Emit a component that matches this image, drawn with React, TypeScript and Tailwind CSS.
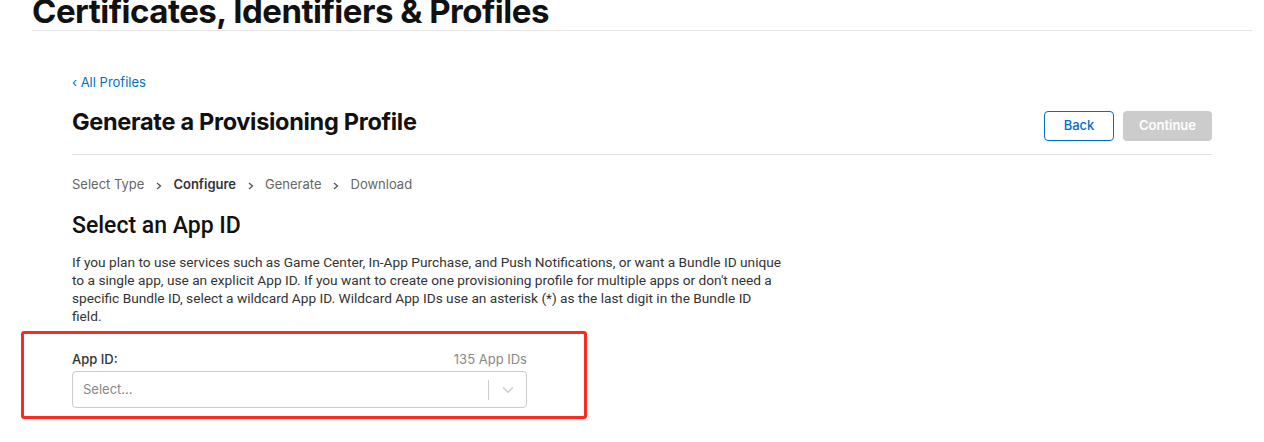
import { ChevronDown } from 'lucide-react';

const steps = [
  { label: 'Select Type', active: false },
  { label: 'Configure', active: true },
  { label: 'Generate', active: false },
  { label: 'Download', active: false },
];

export default function App() {
  return (
    <div className="relative h-[442px] w-[1264px] overflow-hidden bg-white font-['Inter',sans-serif] text-[#111]">
      {/* page header, cut off at the top */}
      <div className="ml-8 mr-3 -mt-[8px] border-b border-[#e5e5e5] pb-[0px]">
        <h1 className="text-[33px] font-bold leading-[38px] tracking-[-0.5px]">Certificates, Identifiers &amp; Profiles</h1>
      </div>

      <div className="ml-[72px] mr-[52px] pt-[43px]">
        <a className="block text-[13px] leading-[16px] text-[#0070c9]">‹ All Profiles</a>

        <div className="mt-[13px] flex items-center justify-between border-b border-[#e0e0e0] pb-[13px]">
          <h2 className="text-[23.5px] font-bold leading-[32px] tracking-[-0.3px]">Generate a Provisioning Profile</h2>
          <div className="mt-[8px] flex gap-[9px]">
            <button className="h-[30px] w-[70px] rounded-[4px] border border-[#0070c9] text-[13px] font-medium text-[#0070c9]">Back</button>
            <button className="h-[30px] w-[89px] rounded-[4px] bg-[#cccccc] text-[13px] font-semibold text-white">Continue</button>
          </div>
        </div>

        <div className="mt-[20px] flex items-center text-[13px] leading-[18px] text-[#666]">
          {steps.map((s, i) => (
            <span key={s.label} className="flex items-center">
              {i > 0 && (
                <svg className="mx-[11.5px] mt-[4px]" width="6" height="8" viewBox="0 0 6 8" fill="none">
                  <path d="M1 1l3.5 3L1 7" stroke="#555" strokeWidth="1.3" />
                </svg>
              )}
              <span className={s.active ? 'font-semibold text-[#333]' : ''}>{s.label}</span>
            </span>
          ))}
        </div>

        <h3 className="mt-[19px] font-['Roboto',sans-serif] text-[23px] font-medium leading-[28px]">Select an App ID</h3>

        <p className="mt-[13px] whitespace-nowrap font-['Roboto',sans-serif] text-[13.7px] leading-[18px] text-[#333]">
          If you plan to use services such as Game Center, In-App Purchase, and Push Notifications, or want a Bundle ID unique
          <br />
          to a single app, use an explicit App ID. If you want to create one provisioning profile for multiple apps or don't need a
          <br />
          specific Bundle ID, select a wildcard App ID. Wildcard App IDs use an asterisk (*) as the last digit in the Bundle ID
          <br />
          field.
        </p>

        <div className="mt-[26px] w-[455px]">
          <div className="flex items-end justify-between">
            <span className="text-[13px] font-medium leading-[16px] text-[#333]">App ID:</span>
            <span className="text-[13px] leading-[16px] text-[#888]">135 App IDs</span>
          </div>
          <div className="mt-[4px] flex h-[37px] items-center rounded-[4px] border border-[#cccccc]">
            <span className="flex-1 pl-[10px] text-[13px] text-[#888]">Select...</span>
            <span className="h-[20px] w-px bg-[#cccccc]" />
            <span className="flex w-[37px] items-center justify-center text-[#ccc]">
              <ChevronDown size={18} strokeWidth={2} />
            </span>
          </div>
        </div>
      </div>

      {/* annotation box */}
      <div className="absolute left-[21px] top-[331px] h-[88px] w-[566px] rounded-[3px] border-[3px] border-[#ff2a1f]" />
    </div>
  );
}
